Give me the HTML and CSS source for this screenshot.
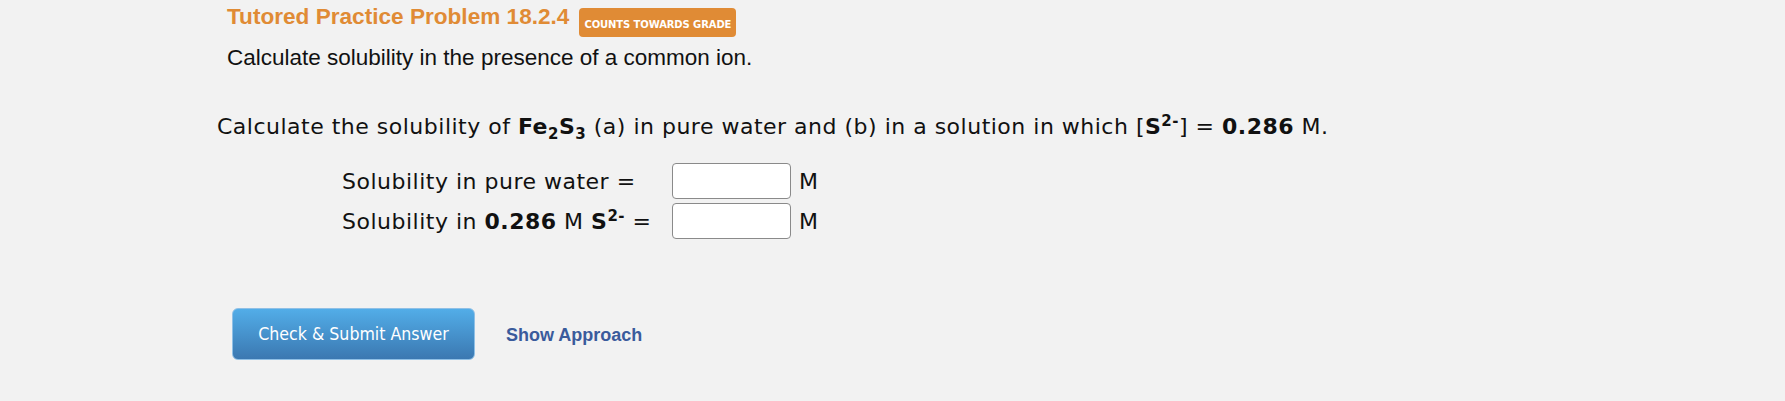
FILE: index.html
```html
<!DOCTYPE html>
<html lang="en">
<head>
<meta charset="utf-8">
<title>Tutored Practice Problem 18.2.4</title>
<link rel="stylesheet" href="styles.css">
</head>
<body>
<div class="page">
  <div class="header">
    <h1 class="title">Tutored Practice Problem 18.2.4</h1>
    <span class="badge">COUNTS TOWARDS GRADE</span>
  </div>
  <p class="subtitle">Calculate solubility in the presence of a common ion.</p>
  <p class="question">Calculate the solubility of <b>Fe<sub>2</sub>S<sub>3</sub></b> (a) in pure water and (b) in a solution in which [<b>S<sup>2-</sup></b>] = <b>0.286</b> M.</p>
  <div class="answers">
    <span class="label">Solubility in pure water =</span>
    <input class="field" type="text">
    <span class="unit">M</span>
    <span class="label">Solubility in <b>0.286</b> M <b>S<sup>2-</sup></b> =</span>
    <input class="field" type="text">
    <span class="unit">M</span>
  </div>
  <div class="actions">
    <button class="submit" type="button">Check &amp; Submit Answer</button>
    <a class="approach" href="#">Show Approach</a>
  </div>
</div>
</body>
</html>
```
FILE: styles.css
```css
html, body {
  margin: 0;
  padding: 0;
  background: #f2f2f2;
}
body {
  width: 1785px;
  height: 401px;
  overflow: hidden;
}
.page {
  padding-left: 217px;
  color: #111;
}
.header {
  display: flex;
  align-items: flex-start;
  gap: 10px;
  margin-left: 10px;
  padding-top: 3px;
}
.title {
  margin: 0;
  font-family: "Liberation Sans", Arial, sans-serif;
  font-weight: bold;
  font-size: 22.6px;
  line-height: 28px;
  color: #e08b35;
}
.badge {
  margin-top: 5px;
  height: 29px;
  box-sizing: border-box;
  padding: 3px 5px 0;
  display: flex;
  align-items: center;
  background: #e08b35;
  border-radius: 4px;
  color: #fff;
  font-family: "DejaVu Sans", Verdana, sans-serif;
  font-weight: bold;
  font-size: 10px;
  letter-spacing: -0.1px;
}
.subtitle {
  margin: 7px 0 0 10px;
  font-family: "Liberation Sans", Arial, sans-serif;
  font-size: 22.5px;
  line-height: 28px;
  color: #111;
}
.question {
  margin: 40px 0 0 0;
  font-family: "DejaVu Sans", Verdana, sans-serif;
  font-size: 22px;
  letter-spacing: 0.5px;
  line-height: 30px;
}
.question sub, .answers sub {
  font-size: 15px;
  vertical-align: -5px;
  line-height: 0;
}
.question sup, .answers sup {
  font-size: 15px;
  vertical-align: 8px;
  line-height: 0;
}
.answers {
  margin: 21px 0 0 125px;
  display: grid;
  grid-template-columns: 330px 119px auto;
  grid-auto-rows: 36px;
  row-gap: 4px;
  align-items: center;
  font-family: "DejaVu Sans", Verdana, sans-serif;
  font-size: 22px;
  letter-spacing: 0.5px;
}
.field {
  width: 119px;
  height: 36px;
  box-sizing: border-box;
  border: 1px solid #8a8a8a;
  border-radius: 4px;
  background: #fff;
  margin: 0;
}
.unit {
  margin-left: 8px;
}
.actions {
  margin: 69px 0 0 15px;
  display: flex;
  align-items: center;
  gap: 31px;
}
.submit {
  width: 243px;
  height: 52px;
  border: 1px solid #8fc0e6;
  border-radius: 6px;
  background: linear-gradient(#52ade8, #3b78b1);
  color: #fff;
  font-family: "DejaVu Sans Condensed", "DejaVu Sans", Tahoma, sans-serif;
  font-size: 17.6px;
  padding: 0;
}
.approach {
  font-family: "Liberation Sans", Arial, sans-serif;
  font-weight: bold;
  font-size: 18px;
  color: #3a5b9c;
  text-decoration: none;
  margin-top: 3px;
}
```
